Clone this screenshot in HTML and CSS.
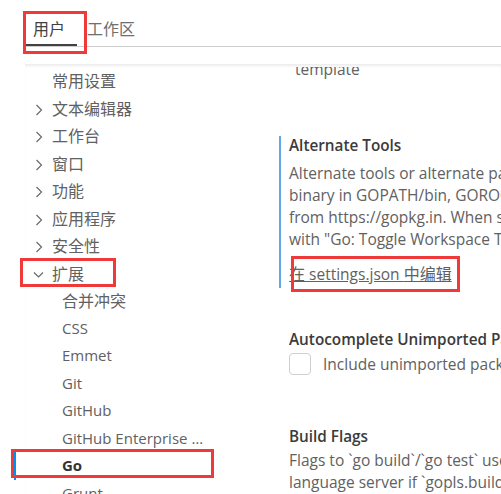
FILE: index.html
```html
<!DOCTYPE html>
<html lang="zh-CN">
<head>
    <meta charset="UTF-8">
    <title>设置</title>
    <link rel="stylesheet" href="styles.css">
</head>
<body>
    <div class="settings">
        <div class="tabs">
            <div class="tab active zh">用户</div>
            <div class="tab zh">工作区</div>
        </div>

        <div class="body">
            <div class="tree">
                <div class="row zh">常用设置</div>
                <div class="row zh"><svg class="chev" viewBox="0 0 8 12"><polyline points="1.5,1 6.5,6 1.5,11"/></svg>文本编辑器</div>
                <div class="row zh"><svg class="chev" viewBox="0 0 8 12"><polyline points="1.5,1 6.5,6 1.5,11"/></svg>工作台</div>
                <div class="row zh"><svg class="chev" viewBox="0 0 8 12"><polyline points="1.5,1 6.5,6 1.5,11"/></svg>窗口</div>
                <div class="row zh"><svg class="chev" viewBox="0 0 8 12"><polyline points="1.5,1 6.5,6 1.5,11"/></svg>功能</div>
                <div class="row zh"><svg class="chev" viewBox="0 0 8 12"><polyline points="1.5,1 6.5,6 1.5,11"/></svg>应用程序</div>
                <div class="row zh"><svg class="chev" viewBox="0 0 8 12"><polyline points="1.5,1 6.5,6 1.5,11"/></svg>安全性</div>
                <div class="row zh"><svg class="chev open" viewBox="0 0 11 12"><polyline points="1,3.5 5.5,8 10,3.5"/></svg>扩展</div>
                <div class="row child zh">合并冲突</div>
                <div class="row child">CSS</div>
                <div class="row child">Emmet</div>
                <div class="row child">Git</div>
                <div class="row child">GitHub</div>
                <div class="row child">GitHub Enterprise Server Authentication</div>
                <div class="row child selected">Go</div>
                <div class="row child">Grunt</div>
            </div>

            <div class="list">
                <div class="tail">template</div>

                <div class="item focused">
                    <div class="title">Alternate Tools</div>
                    <div class="desc">
                        Alternate tools or alternate paths for the same tools used by the Go extension. Provide either<br>
                        binary in GOPATH/bin, GOROOT/bin or PATH. Useful when you want to use wrapper script for<br>
                        from https://gopkg.in. When specified as a workspace setting, the setting is used only when<br>
                        with "Go: Toggle Workspace Trust Flag".
                    </div>
                    <a class="edit-link" href="#"><span class="zh">在</span> settings.json <span class="zh">中编辑</span></a>
                </div>

                <div class="item">
                    <div class="title">Autocomplete Unimported Packages</div>
                    <label class="check-row">
                        <span class="checkbox"></span>
                        <span>Include unimported packages in auto-complete suggestions. Not applicable</span>
                    </label>
                </div>

                <div class="item build">
                    <div class="title">Build Flags</div>
                    <div class="desc tight">
                        Flags to `go build`/`go test` used during build-on-save or running tests. (e.g.<br>
                        language server if `gopls.buildFlags` is not specified.
                    </div>
                </div>
            </div>
        </div>

        <!-- annotation boxes -->
        <div class="mark mark-tab"></div>
        <div class="mark mark-ext"></div>
        <div class="mark mark-link"></div>
        <div class="mark mark-go"></div>
    </div>
</body>
</html>
```

FILE: styles.css
```css
body {
    margin: 0;
    background: #ffffff;
    font-family: "Open Sans", "Noto Sans CJK SC", sans-serif;
    font-size: 15px;
    color: #616161;
    overflow: hidden;
}
.zh {
    font-family: "Noto Sans CJK SC", sans-serif;
    font-size: 16px;
}
.settings {
    position: relative;
    width: 501px;
    height: 494px;
    overflow: hidden;
}
.tabs {
    display: flex;
    height: 46px;
    margin-left: 25px;
    border-bottom: 1px solid #cecece;
    align-items: stretch;
}
.tab {
    padding: 0 10px;
    line-height: 56px;
    height: 44px;
    color: #6f6f6f;
    overflow: hidden;
}
.tab.active {
    padding: 0 12px 0 7px;
    margin-left: 1px;
    color: #424242;
    border-bottom: 2px solid #424242;
}
.body {
    display: flex;
    margin-top: 17px;
    margin-left: 25px;
    box-shadow: inset 0 3px 3px -1px #ececec;
    padding-top: 3px;
}
.tree {
    width: 192px;
    margin-left: -11px;
    flex: none;
}
.row {
    height: 27.5px;
    line-height: 27.5px;
    padding-left: 36px;
    white-space: nowrap;
    overflow: hidden;
    text-overflow: ellipsis;
    border-left: 2px solid transparent;
}
.row.child {
    padding-left: 46px;
}
.chev {
    display: inline-block;
    width: 8px;
    height: 12px;
    margin-left: -17px;
    margin-right: 9px;
    vertical-align: -1px;
    fill: none;
    stroke: #6a6a6a;
    stroke-width: 1.2;
}
.chev.open {
    width: 11px;
    margin-left: -19px;
    margin-right: 8px;
}
.row.selected {
    border-left-color: #0090f1;
    font-weight: bold;
    color: #333333;
}
.list {
    flex: 1;
    margin-left: 73px;
    white-space: nowrap;
    overflow: hidden;
    font-size: 15.5px;
}
.tail {
    line-height: 22px;
    margin-top: -9px;
    padding-left: 16px;
}
.item {
    border-left: 2px solid transparent;
    padding-left: 8px;
}
.item.focused {
    margin-top: 56px;
    border-left-color: #63a8e6;
    padding-bottom: 3px;
}
.title {
    line-height: 18px;
    font-size: 15.3px;
    font-weight: 600;
    color: #3b3b3b;
}
.desc {
    margin-top: 8px;
    line-height: 22px;
}
.desc.tight {
    margin-top: 4px;
}
.edit-link {
    display: inline-block;
    margin-top: 12px;
    line-height: 22px;
    color: #616161;
    text-decoration: underline;
}
.item + .item {
    margin-top: 42px;
}
.item.build {
    margin-top: 52px;
}
.check-row {
    display: flex;
    align-items: center;
    gap: 12px;
    margin-top: 5px;
}
.checkbox {
    width: 20px;
    height: 20px;
    border: 1px solid #d0d0d0;
    border-radius: 4px;
    flex: none;
}
.mark {
    position: absolute;
    border: 3px solid #f03a3a;
}
.mark-tab {
    left: 23px;
    top: 11px;
    width: 58px;
    height: 37px;
}
.mark-ext {
    left: 20px;
    top: 258px;
    width: 90px;
    height: 23px;
}
.mark-link {
    left: 291px;
    top: 256px;
    width: 163px;
    height: 30px;
}
.mark-go {
    left: 11px;
    top: 449px;
    width: 197px;
    height: 23px;
}
```
